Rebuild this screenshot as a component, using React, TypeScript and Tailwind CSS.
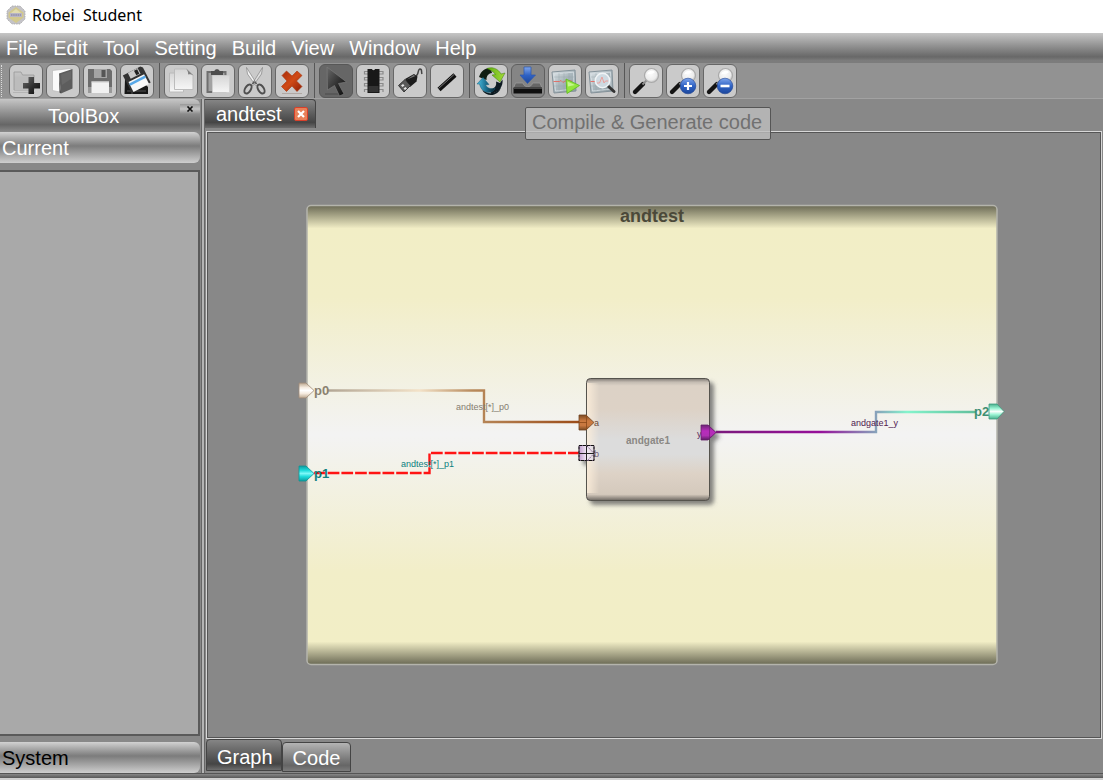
import React, { useState } from "react";
import clsx from "clsx";

const menus = ["File", "Edit", "Tool", "Setting", "Build", "View", "Window", "Help"];

const Defs = () => (
  <svg className="absolute h-0 w-0" aria-hidden="true">
    <defs>
      <linearGradient id="dark" x1="0" y1="0" x2="1" y2="1">
        <stop offset="0" stopColor="#6a6a6a" />
        <stop offset="0.6" stopColor="#2b2b2b" />
        <stop offset="1" stopColor="#0c0c0c" />
      </linearGradient>
      <linearGradient id="paper" x1="0" y1="0" x2="0" y2="1">
        <stop offset="0" stopColor="#d6d6d6" />
        <stop offset="1" stopColor="#f6f6f6" />
      </linearGradient>
      <linearGradient id="folder" x1="0" y1="0" x2="0" y2="1">
        <stop offset="0" stopColor="#c6c6c6" />
        <stop offset="1" stopColor="#a6a6a6" />
      </linearGradient>
      <linearGradient id="blue" x1="0" y1="0" x2="0" y2="1">
        <stop offset="0" stopColor="#7fa6ec" />
        <stop offset="0.5" stopColor="#2f62c4" />
        <stop offset="1" stopColor="#1c479c" />
      </linearGradient>
      <linearGradient id="red" x1="0" y1="0" x2="1" y2="1">
        <stop offset="0" stopColor="#a82c08" />
        <stop offset="0.5" stopColor="#d04a16" />
        <stop offset="1" stopColor="#8c1c04" />
      </linearGradient>
      <linearGradient id="green" x1="0" y1="0" x2="1" y2="0">
        <stop offset="0" stopColor="#5fae10" />
        <stop offset="1" stopColor="#a4dc3a" />
      </linearGradient>
      <linearGradient id="teal" x1="0" y1="0" x2="1" y2="0">
        <stop offset="0" stopColor="#4cc0e4" />
        <stop offset="0.5" stopColor="#1c6f90" />
        <stop offset="1" stopColor="#0a1c26" />
      </linearGradient>
      <linearGradient id="screen" x1="0" y1="0" x2="1" y2="1">
        <stop offset="0" stopColor="#dfe5e8" />
        <stop offset="0.5" stopColor="#a9b6bc" />
        <stop offset="1" stopColor="#8c999f" />
      </linearGradient>
      <radialGradient id="lens" cx="0.45" cy="0.4" r="0.6">
        <stop offset="0" stopColor="#fbfbfb" />
        <stop offset="0.7" stopColor="#ececec" />
        <stop offset="1" stopColor="#bdbdbd" />
      </radialGradient>
    </defs>
  </svg>
);

const Magnifier = () => (
  <>
    <path d="M5 27 13 19" stroke="#141414" strokeWidth="4.4" strokeLinecap="round" />
    <path d="M12.5 19.5 17 15" stroke="#8d8d8d" strokeWidth="2" />
    <circle cx="21.5" cy="10.5" r="7" fill="url(#lens)" stroke="#aaa" strokeWidth="1.2" />
    <path d="M17 9.5a5 5 0 0 1 8-2.5c-2 2.5-5 1.5-8 2.5Z" fill="#fff" />
  </>
);

const Screen = () => (
  <>
    <path d="M3 7 26 5 27 26 5 28Z" fill="url(#screen)" stroke="#84929a" />
    <path d="M5 9 24.5 7.2 25 24 6.5 26Z" fill="none" stroke="#d8e0e4" strokeWidth="0.8" />
    <path d="M5 12h20M5 21h20M10 8v18M15 8v18M20 8v17" stroke="#93a1a8" strokeWidth="0.4" />
    <path d="M4.500 16.500h6l1.500-1 2 2 2-1.500h7" fill="none" stroke="#e2685f" strokeWidth="0.9" />
  </>
);

const icons: Record<string, React.ReactNode> = {
  New: (
    <>
      <path d="M4 7h7l1.5 3H24v15H4Z" fill="url(#folder)" stroke="#989898" strokeWidth="0.8" />
      <path d="M5 12h19v13H4.5Z" fill="#bcbcbc" />
      <path d="M3 27.5h22" stroke="#b4b4b4" />
      <path d="M18.500 12h5.500v6h6v5.500h-6V29h-5.500v-5.500H13V18h5.500Z" fill="url(#dark)" />
    </>
  ),
  Open: (
    <>
      <path d="M5.5 5.5 24 3.5V8L13 27l-7.5-1.5Z" fill="#fafafa" stroke="#b4b4b4" strokeWidth="0.6" />
      <path d="M12 8.5 25.5 4v19.5L14 28.5Z" fill="#5d5d5d" />
      <path d="M12 8.5 14 28.5 12.5 27.5Z" fill="#3c3c3c" />
      <path d="M14 9.5 24 6v8L15 20Z" fill="#686868" />
    </>
  ),
  Save: (
    <>
      <path d="M4 4h22l2 2v22H4Z" fill="#6c6c6c" />
      <path d="M4 22h4v6H4ZM25 22h3v6h-3Z" fill="#999" />
      <path d="M10 4h13v9H10Z" fill="#a4a4a4" />
      <path d="M17.5 5h4v7h-4Z" fill="#555" />
      <path d="M7.5 16.5h17.5V28H7.5Z" fill="#f1f1f1" />
      <path d="M7.5 17h17.5" stroke="#ccc" />
    </>
  ),
  "Save All": (
    <>
      <path d="M4 14l4-5 16 10 3 3v7H3.500Z" fill="#171717" />
      <path d="M6 26h19M11 21v8" stroke="#555" strokeWidth="1" />
      <g transform="rotate(-27 16 15) translate(1 1)">
        <path d="M4.5 3.500H24l2 2V22.500H4.5Z" fill="#333" />
        <path d="M10 3.500h11v6.500H10Z" fill="#c9c9c9" />
        <path d="M16.500 4.500H20v5h-3.500Z" fill="#222" />
        <path d="M6.5 12H24v11H6.5Z" fill="#f7f7f7" />
        <path d="M6.5 13.5H24V16H6.5Z" fill="#58a8e8" />
      </g>
    </>
  ),
  Copy: (
    <>
      <path d="M4.5 8h14v19h-14Z" fill="url(#paper)" stroke="#bababa" />
      <path d="M9.5 4H22l6 6v14.5H9.5Z" fill="url(#paper)" stroke="#bcbcbc" />
      <path d="M21 3.5 28.5 10.5C26 9 24 9 23 9.5c.5-2-.5-4-2-6Z" fill="#808080" />
    </>
  ),
  Paste: (
    <>
      <path d="M4.5 6h20v22h-20Z" fill="#6f6f6f" />
      <path d="M6.5 8h16v18h-16Z" fill="#a2a2a2" />
      <path d="M9 6h3.5c0-2.5 5-2.5 5 0H21v4H9Z" fill="#4d4d4d" />
      <path d="M10.5 10.5h17v17h-17Z" fill="url(#paper)" stroke="#cfcfcf" strokeWidth="0.8" />
    </>
  ),
  Cut: (
    <>
      <path d="M7.500 2.500 18.500 20l-1.800.5L8.500 9Z" fill="#f2f2f2" stroke="#777" strokeWidth="0.6" />
      <path d="M23.500 2.5 12.500 20l1.800.5L22.5 9Z" fill="#dedede" stroke="#777" strokeWidth="0.6" />
      <path d="M13.500 19 15.500 16.500 17.500 19" fill="none" stroke="#555" strokeWidth="1.500" />
      <ellipse cx="9" cy="24" rx="2.800" ry="5" transform="rotate(32 9 24)" fill="none" stroke="#4f4f4f" strokeWidth="2" />
      <ellipse cx="22" cy="24" rx="2.800" ry="5" transform="rotate(-32 22 24)" fill="none" stroke="#4f4f4f" strokeWidth="2" />
      <circle cx="15.5" cy="16.5" r="1" fill="#888" />
    </>
  ),
  Delete: (
    <>
      <path d="M6 28.5h20" stroke="#b0a8a4" />
      <path d="M10.5 6 16 11l5-5 5 4.5-5.5 5.5 5.5 5.5-5 5-5-5.5-5.5 5.5-5-5L11 16l-5-5.5Z" fill="url(#red)" stroke="#a8360e" strokeWidth="0.6" />
    </>
  ),
  Select: (
    <>
      <path d="M5 29h15" stroke="#505050" strokeWidth="1.2" />
      <path d="M7 2 26.5 17l-8 1.5 5.500 10.500-4.500 2-5-10.500L7.5 25Z" fill="url(#dark)" stroke="#7a7a7a" strokeWidth="0.7" />
    </>
  ),
  Module: (
    <>
      <path d="M11 6.500H7.5V9H11M11 12.500H7.5V15H11M11 18.500H7.5V21H11M11 24.500H7.500V27M22 6.500h4V9h-4M22 12.5h4V15h-4M22 18.5h4V21h-4M22 24.500h4V27" fill="none" stroke="#8a8a8a" strokeWidth="1.2" />
      <path d="M10.5 4h4.500c0 1.500 3 1.500 3 0h4.500v24h-12Z" fill="#181818" />
      <path d="M11.5 21h10v6h-10Z" fill="#333" />
    </>
  ),
  Port: (
    <>
      <path d="M22 11c3-1 1.5-7 4-7 2.5 0 1 3 2 5" fill="none" stroke="#444" strokeWidth="1.5" />
      <path d="M11 14 20 9l3.5 2.5-1 5L16 22Z" fill="#1c1c1c" />
      <path d="M13 14.5 19.5 10l2 1Z" fill="#777" />
      <path d="M4.5 20.500 11 14.5l5.5 6-6.500 6.500Z" fill="#595959" stroke="#222" strokeWidth="0.8" />
      <path d="M7 20.5l2-1.5 1.5 1.5-2 1.5ZM9.5 23.5l2-1.5 1.5 1.5-2 1.5Z" fill="#e4e4e4" />
    </>
  ),
  Wire: (
    <>
      <path d="M8 24.500 24 10" stroke="#111" strokeWidth="4.6" />
      <path d="M7.500 23.500 23 9.500" stroke="#777" strokeWidth="1" />
    </>
  ),
  Check: (
    <>
      <path d="M4 12C6 6 10 3 15.5 3l1.5 5c-4 .5-5.5 3-5.5 7-3-1-5-2-7.5-3Z" fill="#101d12" />
      <path d="M12 3.5C17 1.5 23 3.5 26 9l4-1-5 9-8-7 3.5-.5C18 6 15 5 12 3.5Z" fill="url(#green)" stroke="#3e7a0a" strokeWidth="0.5" />
      <path d="M27.5 14.5c1 7-4 13.5-11.5 14L14.5 24c5 0 7.5-3 6.5-7.5l4 1.5Z" fill="#0d1a22" />
      <path d="M2 19l6-6.5 6 7-3.5.5c1.5 3 5 4.5 9.5 3.5-2 5-12.5 7-15.5-4.5Z" fill="url(#teal)" stroke="#14607e" strokeWidth="0.5" />
      <path d="M7 25c6 5 15 4 19-3-2 9-14 11-19 3Z" fill="#0b1920" />
    </>
  ),
  "Compile & Generate code": (
    <>
      <path d="M3.5 18H11c1 5 8.5 5 9.5 0h7.5l2 5H1.5Z" fill="#666" stroke="#9a9a9a" strokeWidth="0.8" />
      <path d="M1.5 22.5h28.5v6H1.5Z" fill="#0f0f0f" />
      <path d="M1.5 23.5h28.5" stroke="#454545" strokeWidth="1" />
      <path d="M12 2h7v8h4.5L15.5 18.5 8 10h4Z" fill="url(#blue)" stroke="#2c58ae" strokeWidth="0.7" />
    </>
  ),
  Simulate: (
    <>
      <Screen />
      <path d="M17 14 30.5 20.5 18 28.5Z" fill="#93e63c" stroke="#5cb81c" strokeWidth="0.8" />
      <path d="M18.5 16.5 26 20l-7 1.5Z" fill="#c4f58c" />
    </>
  ),
  Waveform: (
    <>
      <Screen />
      <path d="M22 21 28 26.5" stroke="#333" strokeWidth="3" strokeLinecap="round" />
      <circle cx="16.5" cy="15.5" r="7.2" fill="#d3dee5" fillOpacity="0.9" stroke="#f0f4f6" strokeWidth="1.5" />
      <path d="M11 18h2.5l2.5-6 2 6 1.5-2H22" fill="none" stroke="#e9a09c" />
    </>
  ),
  Zoom: <Magnifier />,
  "Zoom In": (
    <>
      <Magnifier />
      <circle cx="21" cy="21" r="7.8" fill="url(#blue)" stroke="#1e4290" strokeWidth="0.6" />
      <path d="M21 17v8M17 21h8" stroke="#fff" strokeWidth="2.2" />
    </>
  ),
  "Zoom Out": (
    <>
      <Magnifier />
      <circle cx="21" cy="21" r="7.8" fill="url(#blue)" stroke="#1e4290" strokeWidth="0.6" />
      <path d="M16.5 21h9" stroke="#fff" strokeWidth="2.6" />
    </>
  ),
};

const toolGroups = [
  ["New", "Open", "Save", "Save All"],
  ["Copy", "Paste", "Cut", "Delete"],
  ["Select", "Module", "Port", "Wire"],
  ["Check", "Compile & Generate code", "Simulate", "Waveform"],
  ["Zoom", "Zoom In", "Zoom Out"],
];

const HOVERED = "Compile & Generate code";

const ToolButton = ({ name, active, onClick }: { name: string; active: boolean; onClick: () => void }) => (
  <div className="relative">
    <button
      type="button"
      aria-label={name}
      onClick={onClick}
      className={clsx(
        "block h-[34px] w-[34px] rounded-md border",
        active && "border-[#575757] bg-[#666]",
        !active && name === HOVERED && "border-[#5f5f5f] bg-[#858585]",
        !active && name !== HOVERED && "border-[#676767] bg-[#cacaca]"
      )}
    >
      <svg viewBox="0 0 32 32" className="h-8 w-8" fill="none" aria-hidden="true">
        {icons[name]}
      </svg>
    </button>
    {name === HOVERED && (
      <div role="tooltip" className="absolute top-[43px] left-[14px] z-20 h-[33px] rounded-xs border border-[#555] bg-[#bebebe]/80 pr-2 pl-[6px] text-xl leading-[29px] whitespace-nowrap text-[#717171]">
        {name}
      </div>
    )}
  </div>
);

const Toolbar = () => {
  const [tool, setTool] = useState("Select");

  return (
    <div role="toolbar" className="relative flex h-[38px] shrink-0 items-center border-t-2 border-b border-t-[#7c7c7c] border-b-[#a2a2a2] bg-[#929292] pl-px">
      <div className="mr-[7px] h-8 border-l border-dotted border-[#ddd]" />
      {toolGroups.map((group, i) => (
        <React.Fragment key={group[0]}>
          {i > 0 && <div className="mr-1 ml-[5px] h-[35px] w-px bg-[#575757]" />}
          <div className="flex gap-[3px]">
            {group.map((name) => (
              <ToolButton key={name} name={name} active={tool === name} onClick={() => setTool(name)} />
            ))}
          </div>
        </React.Fragment>
      ))}
    </div>
  );
};

const SectionButton = ({ label, className }: { label: string; className: string }) => (
  <button
    type="button"
    className={clsx(
      "block h-[31px] w-[200px] shrink-0 rounded-r-md bg-linear-to-b from-[#d2d2d2] via-[#7c7c7c] via-45% to-[#cfcfcf] pl-[2px] text-left text-xl leading-[33px]",
      className
    )}
  >
    {label}
  </button>
);

const ToolBox = () => (
  <aside className="flex w-[201px] shrink-0 flex-col">
    <div className="flex h-8 w-[200px] shrink-0 rounded-tr-md bg-linear-to-b from-[#c6c6c6] via-[#666] via-80% to-[#858585]">
      <h2 className="flex-1 pl-12 text-xl leading-[34px] text-white">ToolBox</h2>
      <button type="button" aria-label="Close" className="mt-[5px] flex h-[10px] w-5 items-center justify-center bg-linear-to-b from-[#999] via-[#c4c4c4] to-[#8c8c8c]">
        <svg viewBox="0 0 8 6" className="h-[6px] w-2" aria-hidden="true">
          <path d="M1.5 .5 6.5 5.5M6.5 .5 1.5 5.5" stroke="#111" strokeWidth="1.6" />
        </svg>
      </button>
    </div>
    <SectionButton label="Current" className="mt-px text-white" />
    <div className="mt-[7px] w-[200px] flex-1 border-t-2 border-r-2 border-b-2 border-[#5a5a5a] bg-[#a9a9a9]" />
    <SectionButton label="System" className="mt-[6px] text-black" />
  </aside>
);

// Coordinates are relative to the top left corner of the module
const Diagram = () => (
  <svg width="716" height="470" viewBox="-11 -5 716 470" className="shrink-0 font-['Liberation_Sans',Arial,sans-serif]" role="img" aria-label="andtest">
    <defs>
      <linearGradient id="body" x1="0" y1="0" x2="0" y2="1">
        <stop offset="0" stopColor="#6b6a55" />
        <stop offset="0.05" stopColor="#f2eec6" />
        <stop offset="0.2" stopColor="#f2eec8" />
        <stop offset="0.5" stopColor="#f3f3f3" />
        <stop offset="0.8" stopColor="#f2eec8" />
        <stop offset="0.95" stopColor="#f2eec6" />
        <stop offset="1" stopColor="#6b6a55" />
      </linearGradient>
      <linearGradient id="gate" x1="0" y1="0" x2="0" y2="1">
        <stop offset="0" stopColor="#7d7873" />
        <stop offset="0.03" stopColor="#c4bcb2" />
        <stop offset="0.06" stopColor="#dcd2c6" />
        <stop offset="0.25" stopColor="#ddd2c6" />
        <stop offset="0.5" stopColor="#dcdcdc" />
        <stop offset="0.62" stopColor="#dcdcdc" />
        <stop offset="0.78" stopColor="#ddd2c6" />
        <stop offset="0.95" stopColor="#d4c9bc" />
        <stop offset="1" stopColor="#6d6862" />
      </linearGradient>
      <linearGradient id="gateEdge" x1="0" y1="0" x2="1" y2="0">
        <stop offset="0" stopColor="#fff0dc" stopOpacity="0.8" />
        <stop offset="0.1" stopColor="#fff0dc" stopOpacity="0" />
      </linearGradient>
      <linearGradient id="wireP0" gradientUnits="userSpaceOnUse" x1="6" y1="0" x2="272" y2="0">
        <stop offset="0" stopColor="#a89c8c" />
        <stop offset="0.4" stopColor="#f3e2c8" />
        <stop offset="0.6" stopColor="#b88a5c" />
        <stop offset="1" stopColor="#9c4c18" />
      </linearGradient>
      <linearGradient id="wireY" gradientUnits="userSpaceOnUse" x1="409" y1="0" x2="682" y2="0">
        <stop offset="0" stopColor="#7a1a7c" />
        <stop offset="0.38" stopColor="#96109a" />
        <stop offset="0.57" stopColor="#8896b8" />
        <stop offset="0.7" stopColor="#84f4cc" />
        <stop offset="1" stopColor="#5ab492" />
      </linearGradient>
      <linearGradient id="portP0" x1="0" y1="0" x2="0" y2="1">
        <stop offset="0" stopColor="#bca890" />
        <stop offset="0.3" stopColor="#f6ece0" />
        <stop offset="0.5" stopColor="#fff" />
        <stop offset="0.7" stopColor="#f6ece0" />
        <stop offset="1" stopColor="#bca890" />
      </linearGradient>
      <linearGradient id="portP1" x1="0" y1="0" x2="0" y2="1">
        <stop offset="0" stopColor="#0c9ca0" />
        <stop offset="0.3" stopColor="#20dcdc" />
        <stop offset="0.5" stopColor="#7cf8f8" />
        <stop offset="0.7" stopColor="#20dcdc" />
        <stop offset="1" stopColor="#0c9ca0" />
      </linearGradient>
      <linearGradient id="portP2" x1="0" y1="0" x2="0" y2="1">
        <stop offset="0" stopColor="#48b08c" />
        <stop offset="0.3" stopColor="#9cf4d4" />
        <stop offset="0.5" stopColor="#f8fffc" />
        <stop offset="0.7" stopColor="#9cf4d4" />
        <stop offset="1" stopColor="#48b08c" />
      </linearGradient>
      <linearGradient id="portA" x1="0" y1="0" x2="0" y2="1">
        <stop offset="0" stopColor="#7c4a22" />
        <stop offset="0.4" stopColor="#cc7a40" />
        <stop offset="0.7" stopColor="#c87840" />
        <stop offset="1" stopColor="#7c4a22" />
      </linearGradient>
      <linearGradient id="portB" x1="0" y1="0" x2="1" y2="0">
        <stop offset="0" stopColor="#c09cd0" />
        <stop offset="0.5" stopColor="#f2eaf6" />
        <stop offset="1" stopColor="#e0dadc" />
      </linearGradient>
      <linearGradient id="portY" x1="0" y1="0" x2="0" y2="1">
        <stop offset="0" stopColor="#6c2474" />
        <stop offset="0.4" stopColor="#b82cbc" />
        <stop offset="0.7" stopColor="#b030b4" />
        <stop offset="1" stopColor="#5c1c64" />
      </linearGradient>
      <filter id="shadow" x="-10%" y="-10%" width="130%" height="130%">
        <feDropShadow dx="4" dy="4" stdDeviation="2" floodColor="#555" floodOpacity="0.7" />
      </filter>
    </defs>

    <rect x="0" y="0.5" width="690" height="459" rx="4" fill="url(#body)" stroke="#b4b4ac" strokeWidth="1.5" />
    <text x="345" y="17" textAnchor="middle" fontSize="18" fontWeight="bold" fill="#4b4939">andtest</text>

    <path d="M-8 178H-1L7 185.5-1 193H-8Z" fill="url(#portP0)" stroke="#a08c78" strokeWidth="0.8" />
    <path d="M-8 261H-1L7 268.5-1 276H-8Z" fill="url(#portP1)" stroke="#0c9494" strokeWidth="0.8" />

    <g filter="url(#shadow)">
      <rect x="279.5" y="173.5" width="123" height="122" rx="4" fill="url(#gate)" stroke="#55524e" />
      <path d="M272 241h15v15h-15Z" fill="url(#portB)" />
      <path d="M394 220h7l8 7.5-8 7.5h-7Z" fill="#933096" />
    </g>
    <rect x="280" y="178" width="122" height="110" fill="url(#gateEdge)" />
    <text x="341" y="239" textAnchor="middle" fontSize="10" fontWeight="bold" fill="#8b8884">andgate1</text>

    <path d="M21 185.500H177V217H272" fill="none" stroke="url(#wireP0)" strokeWidth="2.400" />
    <path d="M7 268H122.5V248H272" fill="none" stroke="#ff1414" strokeWidth="2.4" strokeDasharray="11.7 2" />
    <path d="M409 227H569V207H669" fill="none" stroke="url(#wireY)" strokeWidth="2.4" />

    <path d="M272 210h7l8 7.5-8 7.5h-7Z" fill="url(#portA)" stroke="#6e4424" strokeWidth="0.8" />
    <path d="M272 217.5h8M279.5 210v15" stroke="#8a4818" strokeWidth="0.800" />
    <text x="287" y="221" fontSize="9" fill="#6b4a3a">a</text>

    <text x="287" y="252" fontSize="9" fill="#6e5a78">b</text>
    <path d="M272 240.500h15v15h-15Z" fill="url(#portB)" stroke="#6a5470" />
    <path d="M272 240.500h15v15h-15Z" fill="none" stroke="#111" strokeDasharray="3 1" />
    <path d="M280 241l7 7.5-7 7.5" fill="none" stroke="#8a6a94" strokeWidth="1" strokeDasharray="2 1" />
    <path d="M272 248.5h15M279.5 241v15" stroke="#222" />

    <text x="390" y="232" fontSize="9" fill="#5a2a60">y</text>
    <path d="M394 220h7l8 7.5-8 7.5h-7Z" fill="url(#portY)" stroke="#64206a" strokeWidth="0.8" />
    <path d="M402.5 220v15" stroke="#64206a" strokeWidth="0.6" />

    <path d="M682 199h8l7 7.5-7 7.5h-8Z" fill="url(#portP2)" stroke="#3f9c80" strokeWidth="0.8" />

    <text x="7" y="190" fontSize="13" fontWeight="bold" fill="#8a8170">p0</text>
    <text x="7" y="273" fontSize="13" fontWeight="bold" fill="#108080">p1</text>
    <text x="667" y="211" fontSize="13" fontWeight="bold" fill="#3f8f72">p2</text>
    <text x="149" y="205" fontSize="9" fill="#857d70">andtest[*]_p0</text>
    <text x="94" y="262" fontSize="9" fill="#0c8080">andtest[*]_p1</text>
    <text x="544" y="221" fontSize="9" fill="#50204f">andgate1_y</text>
  </svg>
);

const App = () => {
  const [view, setView] = useState("Graph");

  return (
    <div className="flex h-screen flex-col overflow-hidden bg-[#888] font-['Liberation_Sans',Arial,sans-serif]">
      <Defs />
      <header className="flex h-[33px] shrink-0 items-center bg-white pb-1 pl-[6px]">
        <svg viewBox="0 0 20 20" className="h-5 w-5" aria-hidden="true">
          <path d="M6 1h8l5 5v8l-5 5H6l-5-5V6Z" fill="#c4c3c8" stroke="#a4a4a4" strokeWidth="0.8" strokeDasharray="1.5 1" />
          <path d="M10 2 17.500 7.500v5L10 18l-7.500-5.500v-5Z" fill="#d2c88e" />
          <path d="M10 4 15 8H5Z" fill="#e2dcae" />
          <path d="M4 8h12v4H4Z" fill="#b9b6c4" />
          <path d="M5 10h10" stroke="#8f8cab" strokeWidth="1.5" strokeDasharray="1.5 .7" />
        </svg>
        <h1 className="pl-[6px] font-['Noto_Sans',sans-serif] text-base whitespace-pre text-black">Robei  Student</h1>
      </header>

      <nav className="flex h-7 shrink-0 gap-[15px] bg-linear-to-b from-[#c6c6c6] via-[#686868] via-85% to-[#7e7e7e] pl-[6px]">
        {menus.map((menu) => (
          <button key={menu} type="button" className="text-xl leading-[30px] text-white">
            {menu}
          </button>
        ))}
      </nav>

      <Toolbar />

      <div className="flex min-h-0 flex-1">
        <ToolBox />
        <div className="w-1 shrink-0 border-x border-[#666] bg-[#b5b5b5]" />

        <main className="flex min-w-0 flex-1 flex-col">
          <div className="flex h-8 shrink-0">
            <div className="flex h-[29px] w-[111px] items-center rounded-tr-sm border-t border-r border-[#444] bg-linear-to-b from-[#858585] via-[#454545] via-80% to-[#6e6e6e] pl-[11px]">
              <span className="text-xl leading-7 text-white">andtest</span>
              <button type="button" aria-label="Close andtest" className="ml-3 flex h-[14px] w-[14px] items-center justify-center rounded-xs border border-[#d8402a] bg-[#e88058]">
                <svg viewBox="0 0 8 8" className="h-2 w-2" aria-hidden="true">
                  <path d="M1 1 7 7M7 1 1 7" stroke="#fff" strokeWidth="2.2" />
                </svg>
              </button>
            </div>
          </div>

          <div className="mr-px ml-px flex min-h-0 flex-1 border border-[#d8d8d8]">
            <div className="flex min-w-0 flex-1 items-center justify-center overflow-hidden border border-[#555] bg-[#888]">
              <Diagram />
            </div>
          </div>

          <div className="flex h-[34px] shrink-0 items-start pl-px">
            {["Graph", "Code"].map((name) => (
              <button
                key={name}
                type="button"
                onClick={() => setView(name)}
                className={clsx(
                  "rounded-t-sm border border-[#444] text-xl text-white",
                  view === name
                    ? "h-8 bg-linear-to-b from-[#858585] via-[#454545] via-80% to-[#6e6e6e] pr-2 pl-[10px] leading-[34px]"
                    : "mt-[3px] h-[30px] bg-linear-to-b from-[#b4b4b4] via-[#666] via-80% to-[#7c7c7c] px-[10px] leading-[30px]"
                )}
              >
                {name}
              </button>
            ))}
          </div>
        </main>
      </div>

      <footer className="h-[7px] shrink-0 border-t border-b-2 border-t-[#555] border-b-[#d0d0d0] bg-linear-to-b from-[#888] to-[#585858]" />
    </div>
  );
};

export default App;
